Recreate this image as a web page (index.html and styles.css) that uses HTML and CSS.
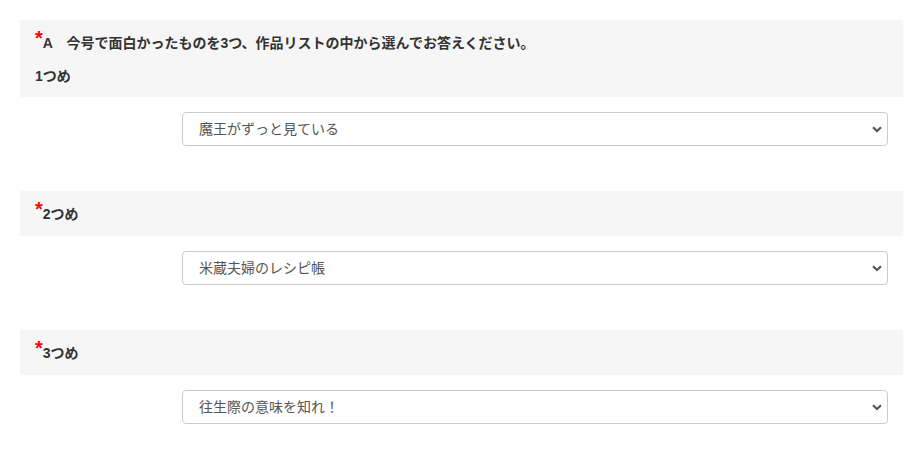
FILE: index.html
```html
<!DOCTYPE html>
<html lang="ja">
<head>
<meta charset="utf-8">
<link rel="stylesheet" href="styles.css">
</head>
<body>
<div class="form">
  <div class="item">
    <div class="q first">
      <div class="line"><span class="req">*</span>A　今号で面白かったものを3つ、作品リストの中から選んでお答えください。</div>
      <div class="line">1つめ</div>
    </div>
    <div class="ans">
      <div class="sel">
        <select><option>魔王がずっと見ている</option></select>
        <svg class="chev" width="10" height="7" viewBox="0 0 10 7"><path d="M1 1.2 L5 5 L9 1.2" fill="none" stroke="#555" stroke-width="2.2"/></svg>
      </div>
    </div>
  </div>
  <div class="item">
    <div class="q">
      <div class="line"><span class="req">*</span>2つめ</div>
    </div>
    <div class="ans">
      <div class="sel">
        <select><option>米蔵夫婦のレシピ帳</option></select>
        <svg class="chev" width="10" height="7" viewBox="0 0 10 7"><path d="M1 1.2 L5 5 L9 1.2" fill="none" stroke="#555" stroke-width="2.2"/></svg>
      </div>
    </div>
  </div>
  <div class="item">
    <div class="q">
      <div class="line"><span class="req">*</span>3つめ</div>
    </div>
    <div class="ans">
      <div class="sel">
        <select><option>往生際の意味を知れ！</option></select>
        <svg class="chev" width="10" height="7" viewBox="0 0 10 7"><path d="M1 1.2 L5 5 L9 1.2" fill="none" stroke="#555" stroke-width="2.2"/></svg>
      </div>
    </div>
  </div>
</div>
</body>
</html>
```
FILE: styles.css
```css
html, body {
  margin: 0;
  padding: 0;
  background: #fff;
}
body {
  font-family: "Liberation Sans", "Noto Sans CJK JP", sans-serif;
  color: #333;
}
.form {
  padding: 20px 21px 0 20px;
}
.item {
  margin-bottom: 45px;
}
.q {
  background: #f6f6f6;
  padding: 7px 15px 5px;
}
.q.first {
  padding-bottom: 4px;
}
.line {
  font-size: 14px;
  font-weight: bold;
  line-height: 33px;
  height: 33px;
}
.req {
  color: #f00;
  font-size: 20px;
  font-weight: bold;
  position: relative;
  top: -3px;
  line-height: 0;
}
.ans {
  padding: 15px 15px 0 162px;
}
.sel {
  position: relative;
}
select {
  display: block;
  width: 100%;
  height: 34px;
  box-sizing: border-box;
  border: 1px solid #ccc;
  border-radius: 4px;
  background: #fff;
  padding: 0 30px 0 16px;
  font-family: "Liberation Sans", "Noto Sans CJK JP", sans-serif;
  font-size: 14px;
  color: #555;
  -webkit-appearance: none;
  appearance: none;
  outline: none;
}
.chev {
  position: absolute;
  right: 6px;
  top: 14px;
  pointer-events: none;
}
```
